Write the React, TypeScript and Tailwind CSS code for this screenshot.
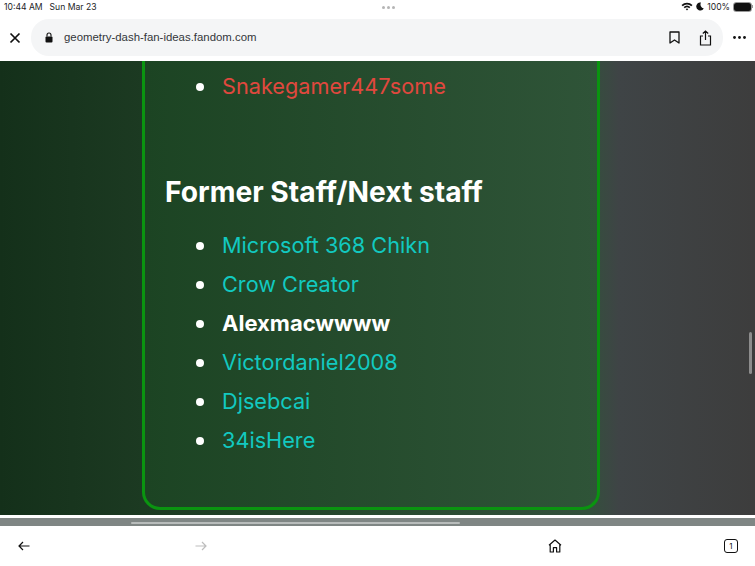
const font = { fontFamily: '"Inter", "Liberation Sans", sans-serif' };

const staff = [
  { n: "Microsoft 368 Chikn" },
  { n: "Crow Creator" },
  { n: "Alexmacwwww", bold: true },
  { n: "Victordaniel2008" },
  { n: "Djsebcai" },
  { n: "34isHere" },
];

function Item({ name, color, bold }: { name: string; color: string; bold?: boolean }) {
  return (
    <li className="flex h-[39px] items-center">
      <span className="ml-[51px] h-[8px] w-[8px] rounded-full bg-white" />
      <span className={`ml-[18px] -mt-[1px] ${bold ? "text-[22px] font-bold" : "text-[21.7px] font-normal"} ${color}`}>{name}</span>
    </li>
  );
}

export default function App() {
  return (
    <div className="flex h-[566px] w-[755px] flex-col overflow-hidden bg-white" style={font}>
      <div className="flex h-[14px] shrink-0 items-center justify-between pl-[4px] pr-[2px] text-[8.6px] text-[#1c1c1e]">
        <div className="flex gap-[7px]"><span>10:44 AM</span><span>Sun Mar 23</span></div>
        <div className="flex gap-[2px]">
          <span className="h-[3px] w-[3px] rounded-full bg-[#b5b5b5]" />
          <span className="h-[3px] w-[3px] rounded-full bg-[#b5b5b5]" />
          <span className="h-[3px] w-[3px] rounded-full bg-[#b5b5b5]" />
        </div>
        <div className="flex items-center gap-[3px]">
          <svg width="12" height="9" viewBox="0 0 12 9"><path d="M0.5 3 A8 8 0 0 1 11.5 3 L10.3 4.3 A6.2 6.2 0 0 0 1.7 4.3Z M2.6 5 A5 5 0 0 1 9.4 5 L8.2 6.3 A3.2 3.2 0 0 0 3.8 6.3Z M4.7 7 A2 2 0 0 1 7.3 7 L6 8.6Z" fill="#111" /></svg>
          <svg width="8" height="9" viewBox="0 0 8 9"><path d="M5 0.5 A4 4 0 1 0 7.8 6.4 A4 4 0 0 1 5 0.5Z" fill="#111" /></svg>
          <span>100%</span>
          <div className="ml-[1px] flex items-center">
            <div className="h-[8px] w-[17px] rounded-[2.5px] bg-[#111] ring-1 ring-[#999]" />
            <div className="ml-[1px] h-[3px] w-[1px] bg-[#999]" />
          </div>
        </div>
      </div>

      <div className="flex h-[47px] shrink-0 items-center py-[5px]">
        <svg className="ml-[9px] mt-[1px]" width="12" height="12" viewBox="0 0 12 12"><path d="M1.5 1.5 L10.5 10.5 M10.5 1.5 L1.5 10.5" stroke="#111" strokeWidth="1.7" /></svg>
        <div className="ml-[10px] flex h-[37px] w-[692px] items-center rounded-[18px] bg-[#f4f5f6]">
          <svg className="ml-[14px]" width="8" height="11" viewBox="0 0 8 11"><path d="M2 4.5 V3 a2 2 0 0 1 4 0 V4.5" fill="none" stroke="#111" strokeWidth="1.1" /><rect x="0.5" y="4.5" width="7" height="6" rx="1" fill="#111" /></svg>
          <span className="ml-[11px] font-['Liberation_Sans'] text-[11.4px] text-[#33363a]">geometry-dash-fan-ideas.fandom.com</span>
          <svg className="ml-auto" width="11" height="13" viewBox="0 0 11 13"><path d="M1 1 H10 V12 L5.5 9 L1 12Z" fill="none" stroke="#111" strokeWidth="1.3" strokeLinejoin="round" /></svg>
          <svg className="ml-[19px] mr-[11px]" width="13" height="16" viewBox="0 0 13 16"><path d="M4 6 H1.5 V15 H11.5 V6 H9 M6.5 10 V1 M3.8 3.5 L6.5 1 L9.2 3.5" fill="none" stroke="#111" strokeWidth="1.2" /></svg>
        </div>
        <svg className="ml-[10px]" width="13" height="3" viewBox="0 0 13 3"><circle cx="1.5" cy="1.5" r="1.4" fill="#111" /><circle cx="6.5" cy="1.5" r="1.4" fill="#111" /><circle cx="11.5" cy="1.5" r="1.4" fill="#111" /></svg>
      </div>

      <div className="relative h-[454px] shrink-0 overflow-hidden bg-[linear-gradient(90deg,#14301a_0%,#1c3a22_19%,#284a30_50%,#33503c_78%,#3f4446_82%,#3d3d3d_100%)]">
        <div className="ml-[142px] flex h-[449px] w-[458px] flex-col rounded-b-[18px] border-x-[3px] border-b-[3px] border-[#0a9410] bg-[linear-gradient(90deg,#1c4423_0%,#2f5438_100%)]">
          <ul className="pt-[6px]">
            <Item name="Snakegamer447some" color="text-[#e0483e]" />
          </ul>
          <h2 className="ml-[20px] mt-[68px] text-[28.2px] font-bold leading-[36px] text-white">Former Staff/Next staff</h2>
          <ul className="mt-[16px]">
            {staff.map((s) => (
              <Item key={s.n} name={s.n} bold={s.bold} color={s.bold ? "text-white" : "text-[#12c9c0]"} />
            ))}
          </ul>
        </div>
        <div className="absolute right-[3px] top-[271px] h-[42px] w-[3px] rounded-full bg-[#8d8d8d]" />
      </div>

      <div className="h-[3px] shrink-0 bg-white" />
      <div className="relative h-[8px] shrink-0 bg-[#7f8684]">
        <div className="absolute left-[131px] top-[4px] h-[2px] w-[329px] rounded-full bg-[#b8bcbb]" />
      </div>

      <div className="flex flex-1 items-center pb-[1px]">
        <svg className="ml-[18px]" width="12" height="10" viewBox="0 0 12 10"><path d="M11.5 5 H1 M5 1 L1 5 L5 9" fill="none" stroke="#111" strokeWidth="1.2" /></svg>
        <svg className="ml-[165px]" width="12" height="10" viewBox="0 0 12 10"><path d="M0.5 5 H11 M7 1 L11 5 L7 9" fill="none" stroke="#bdbdbd" strokeWidth="1.2" /></svg>
        <svg className="ml-[341px]" width="14" height="14" viewBox="0 0 14 14"><path d="M1 6.2 L7 1 L13 6.2 M2.2 5.5 V13 H5.4 V8.6 H8.6 V13 H11.8 V5.5" fill="none" stroke="#111" strokeWidth="1.2" strokeLinejoin="round" /></svg>
        <div className="ml-[162px] flex h-[14px] w-[14px] items-center justify-center rounded-[3px] border border-[#111] text-[8px] text-[#111]">1</div>
      </div>
    </div>
  );
}
